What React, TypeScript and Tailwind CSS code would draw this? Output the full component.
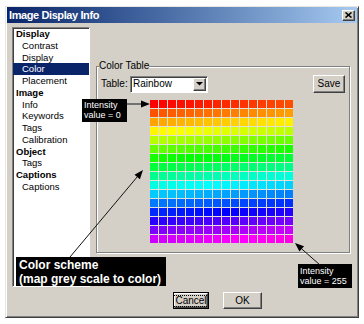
import React from "react";

const tree: { t: string; h?: boolean; sel?: boolean }[] = [
  { t: "Display", h: true },
  { t: "Contrast" },
  { t: "Display" },
  { t: "Color", sel: true },
  { t: "Placement" },
  { t: "Image", h: true },
  { t: "Info" },
  { t: "Keywords" },
  { t: "Tags" },
  { t: "Calibration" },
  { t: "Object", h: true },
  { t: "Tags" },
  { t: "Captions", h: true },
  { t: "Captions" },
];

function Arrow({ x1, y1, x2, y2 }: { x1: number; y1: number; x2: number; y2: number }) {
  const dx = x2 - x1;
  const dy = y2 - y1;
  const len = Math.hypot(dx, dy);
  const ux = dx / len;
  const uy = dy / len;
  const hl = 9;
  const hw = 3.5;
  const bx = x2 - ux * hl;
  const by = y2 - uy * hl;
  const px = -uy;
  const py = ux;
  const pts = `${x2},${y2} ${bx + px * hw},${by + py * hw} ${bx - px * hw},${by - py * hw}`;
  return (
    <g>
      <line x1={x1} y1={y1} x2={bx} y2={by} stroke="#111" strokeWidth="1" />
      <polygon points={pts} fill="#000" />
    </g>
  );
}

const raised =
  "border border-t-white border-l-white border-b-[#404040] border-r-[#404040] shadow-[inset_-1px_-1px_0_#808080]";
const sunken =
  "border border-t-[#808080] border-l-[#808080] border-b-white border-r-white shadow-[inset_1px_1px_0_#404040]";

export default function App() {
  const cells = Array.from({ length: 256 }, (_, i) => `hsl(${(i / 255) * 306}, 100%, 50%)`);
  return (
    <div className="relative w-[364px] h-[324px] bg-white pt-[6px] pl-[5px] font-['Liberation_Sans',Arial,sans-serif] text-black">
      <div className="w-[354px] h-[312px] bg-[#d4d0c8] border border-t-[#e8e6e0] border-l-[#e8e6e0] border-r-[#404040] border-b-[#404040] shadow-[inset_1px_1px_0_#fff,inset_-1px_-1px_0_#808080] flex flex-col">
        {/* title bar */}
        <div className="mx-[1px] h-[16px] bg-linear-to-r from-[#0a246a] to-[#a6caf0] flex items-center justify-between pl-[2px] pr-[2px]">
          <span className="text-white font-bold text-[11px] leading-[16px] tracking-[-0.4px]">Image Display Info</span>
          <div className={`w-[13px] h-[11px] bg-[#d4d0c8] ${raised} flex items-center justify-center`}>
            <svg width="7" height="6" viewBox="0 0 7 6">
              <path d="M0.5 0.5 L6.5 5.5 M6.5 0.5 L0.5 5.5" stroke="#000" strokeWidth="1.6" />
            </svg>
          </div>
        </div>

        {/* body */}
        <div className="flex pl-[6px] mt-[4px]">
          <div className={`w-[78px] h-[260px] bg-white ${sunken} flex flex-col`}>
            {tree.map((it, i) => (
              <div
                key={i}
                className={`h-[11.75px] leading-[11.75px] text-[9.5px] whitespace-nowrap ${
                  it.h ? "font-bold pl-[3px]" : "pl-[9px]"
                } ${it.sel ? "bg-[#0a246a] text-white" : ""}`}
              >
                {it.t}
              </div>
            ))}
          </div>

          <fieldset className="ml-[6px] mt-[33px] w-[254px] h-[193px] border border-[#808080] shadow-[1px_1px_0_#fff,inset_1px_1px_0_#fff] p-0 m-0">
            <legend className="ml-[2px] px-0 bg-[#d4d0c8] text-[10px] leading-[12px]">Color Table</legend>
            <div className="flex flex-col pl-[4px]">
              <div className="flex items-center h-[18px] mt-[3px]">
                <span className="w-[29px] text-[10px] leading-[12px]">Table:</span>
                <div className={`w-[78px] h-[17px] bg-white ${sunken} flex items-center justify-between`}>
                  <span className="pl-[2px] text-[10px] leading-[12px]">Rainbow</span>
                  <div className={`w-[13px] h-[13px] mr-[1px] bg-[#d4d0c8] ${raised} flex items-center justify-center`}>
                    <svg width="7" height="4" viewBox="0 0 7 4">
                      <polygon points="0,0 7,0 3.5,3.5" fill="#000" />
                    </svg>
                  </div>
                </div>
                <div className="flex-1" />
                <div className={`w-[32px] h-[18px] mr-[4px] bg-[#d4d0c8] ${raised} flex items-center justify-center text-[10px] leading-[12px]`}>
                  Save
                </div>
              </div>
              <div className="ml-[49px] mt-[7px] w-[143px] grid grid-cols-[repeat(16,8px)] auto-rows-[8px] gap-[1px] bg-[#e2ded8]">
                {cells.map((c, i) => (
                  <div key={i} style={{ backgroundColor: c }} />
                ))}
              </div>
            </div>
          </fieldset>
        </div>

        {/* buttons */}
        <div className="flex mt-[5px] pl-[167px]">
          <div className="w-[36px] h-[17px] border border-black">
            <div className={`w-full h-full bg-[#d4d0c8] ${raised} flex items-center justify-center`}>
              <span className="border border-dotted border-black px-[1px] text-[10px] leading-[10px]">Cancel</span>
            </div>
          </div>
          <div className={`ml-[14px] w-[39px] h-[17px] bg-[#d4d0c8] ${raised} flex items-center justify-center text-[10px] leading-[12px]`}>
            OK
          </div>
        </div>
      </div>

      {/* annotations */}
      <div className="absolute left-[82px] top-[99px] w-[45px] h-[23px] bg-black text-white text-[9px] leading-[10px] pl-[2px] pt-[1px]">
        <div>Intensity</div>
        <div>value = 0</div>
      </div>
      <div className="absolute left-[16px] top-[257px] w-[150px] h-[29px] bg-black text-white font-bold text-[12px] leading-[14px] pl-[3px] pt-[1px] whitespace-nowrap">
        <div>Color scheme</div>
        <div>(map grey scale to color)</div>
      </div>
      <div className="absolute left-[298px] top-[264px] w-[54px] h-[24px] bg-black text-white text-[9px] leading-[10px] pl-[2px] pt-[2px]">
        <div>Intensity</div>
        <div>value = 255</div>
      </div>
      <svg className="absolute left-0 top-0 pointer-events-none" width="364" height="324">
        <Arrow x1={127} y1={104} x2={150} y2={104} />
        <Arrow x1={70} y1={257} x2={143} y2={170} />
        <Arrow x1={320} y1={265} x2={295} y2={243} />
      </svg>
    </div>
  );
}
